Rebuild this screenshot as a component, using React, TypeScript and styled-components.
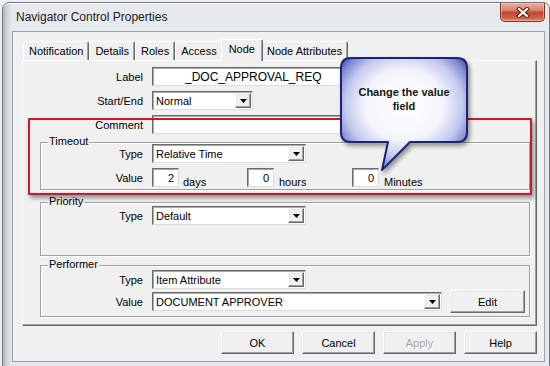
import React from "react";
import styled, { createGlobalStyle, css } from "styled-components";

const GlobalStyle = createGlobalStyle`
  html, body {
    margin: 0;
    padding: 0;
    background: #eef0f2;
  }
  body {
    font-family: "Liberation Sans", Arial, sans-serif;
    font-size: 11px;
    color: #000;
  }
  * {
    box-sizing: border-box;
  }
`;

const sunken = css`
  background: #fff;
  border: 1px solid;
  border-color: #6b6b6b #dcdcdc #dcdcdc #6b6b6b;
  box-shadow: inset 1px 1px 0 #a9a9a9;
`;

const raised = css`
  background: #f0f0f0;
  border: 1px solid;
  border-color: #fcfcfc #696969 #696969 #fcfcfc;
  box-shadow: inset -1px -1px 0 #a0a0a0, inset 1px 1px 0 #e6e6e6;
`;

const Screen = styled.div`
  position: relative;
  width: 550px;
  height: 366px;
  overflow: hidden;
  background: #eef0f2;
`;

const Window = styled.div`
  margin: 2px 0 0 2px;
  width: 548px;
  height: 380px;
  border: 1px solid #6e7781;
  border-radius: 7px 7px 0 0;
  background: linear-gradient(90deg, #b2b7bc 0, #d6dade 5px, #e6e9ed 9px);
  box-shadow: inset 0 1px 0 #fbfcfd;
  display: flex;
  flex-direction: column;
`;

const TitleBar = styled.div`
  height: 28px;
  display: flex;
  align-items: flex-start;
  padding-left: 13px;
`;

const Title = styled.span`
  align-self: center;
  font-size: 12px;
  color: #1b1b1b;
`;

const CloseButton = styled.div`
  margin-left: auto;
  margin-right: 4px;
  width: 45px;
  height: 19px;
  border: 1px solid #7d3326;
  border-top: none;
  border-radius: 0 0 5px 5px;
  background: linear-gradient(#eab1a2 0%, #d98270 40%, #c2452f 52%, #cf5d44 80%, #e08d72 100%);
  box-shadow: inset 0 0 0 1px rgba(255, 210, 200, 0.45);
  display: flex;
  align-items: center;
  justify-content: center;
`;

const Client = styled.div`
  margin-left: 9px;
  width: 533px;
  height: 331px;
  border: 1px solid #99a0a7;
  background: #f0f0f0;
  padding: 7px 7px 0 9px;
  display: flex;
  flex-direction: column;
`;

const TabStrip = styled.div`
  position: relative;
  z-index: 2;
  height: 21px;
  padding-left: 1px;
  display: flex;
  align-items: flex-end;
`;

const Tab = styled.div<{ $active?: boolean }>`
  position: relative;
  height: ${(p) => (p.$active ? 22 : 19)}px;
  margin: ${(p) => (p.$active ? "0 -2px -1px" : "0")};
  z-index: ${(p) => (p.$active ? 2 : 1)};
  padding: 0 ${(p) => (p.$active ? 7 : 5)}px ${(p) => (p.$active ? 3 : 0)}px;
  display: flex;
  align-items: center;
  white-space: nowrap;
  background: #f0f0f0;
  border: 1px solid;
  border-bottom: none;
  border-color: #fff #696969 transparent #fff;
  border-radius: 2px 2px 0 0;
  box-shadow: inset -1px 0 0 #a0a0a0;
`;

const Panel = styled.div`
  position: relative;
  z-index: 1;
  width: 515px;
  border: 1px solid;
  border-color: #fff #696969 #696969 #fff;
  box-shadow: inset -1px -1px 0 #a0a0a0;
  padding: 6px 0 8px 0;
  display: flex;
  flex-direction: column;
`;

const Rows = styled.div<{ $gap: number }>`
  display: flex;
  flex-direction: column;
  gap: ${(p) => p.$gap}px;
`;

const Row = styled.div<{ $h?: number }>`
  display: flex;
  align-items: center;
  height: ${(p) => p.$h ?? 19}px;
`;

const FieldLabel = styled.span<{ $w: number }>`
  flex: 0 0 ${(p) => p.$w}px;
  margin-right: 9px;
  text-align: right;
  white-space: nowrap;
`;

const TextBox = styled.div<{ $w: number; $pad?: number; $size?: number }>`
  ${sunken}
  width: ${(p) => p.$w}px;
  height: 19px;
  padding-left: ${(p) => p.$pad ?? 3}px;
  font-size: ${(p) => p.$size ?? 11}px;
  display: flex;
  align-items: center;
  white-space: nowrap;
  overflow: hidden;
`;

const NumBox = styled.div`
  ${sunken}
  width: 27px;
  height: 19px;
  padding-right: 4px;
  display: flex;
  align-items: center;
  justify-content: flex-end;
`;

const Unit = styled.span<{ $w?: number; $ml: number }>`
  align-self: flex-end;
  line-height: 13px;
  margin-bottom: -2px;
  margin-left: ${(p) => p.$ml}px;
  width: ${(p) => (p.$w ? `${p.$w}px` : "auto")};
  flex-shrink: 0;
`;

const Combo = styled.div<{ $w: number }>`
  ${sunken}
  width: ${(p) => p.$w}px;
  height: 19px;
  padding: 1px 1px 1px 3px;
  display: flex;
  align-items: stretch;
`;

const ComboText = styled.span`
  flex: 1;
  display: flex;
  align-items: center;
  white-space: nowrap;
  overflow: hidden;
`;

const DropButton = styled.span`
  ${raised}
  width: 16px;
  display: flex;
  align-items: center;
  justify-content: center;
`;

const GroupBox = styled.div<{ $mt: number; $pt: number; $pb: number }>`
  position: relative;
  margin: ${(p) => p.$mt}px 0 0 17px;
  width: 490px;
  border: 1px solid #a0a0a0;
  box-shadow: inset 1px 1px 0 #fff, 1px 1px 0 #fff;
  padding: ${(p) => p.$pt}px 0 ${(p) => p.$pb}px 0;
`;

const GroupTitle = styled.span`
  position: absolute;
  top: -8px;
  left: 7px;
  line-height: 13px;
  padding: 0 1px;
  background: #f0f0f0;
`;

const PushButton = styled.div<{ $w?: number; $disabled?: boolean }>`
  ${raised}
  width: ${(p) => p.$w ?? 73}px;
  height: 23px;
  flex-shrink: 0;
  display: flex;
  align-items: center;
  justify-content: center;
  color: ${(p) => (p.$disabled ? "#a0a0a0" : "#000")};
  text-shadow: ${(p) => (p.$disabled ? "1px 1px 0 #fff" : "none")};
`;

const EditButton = styled(PushButton)`
  margin-left: 8px;
`;

const ButtonRow = styled.div`
  margin-top: 5px;
  width: 515px;
  display: flex;
  justify-content: flex-end;
  gap: 8px;
`;

const Highlight = styled.div`
  position: absolute;
  z-index: 5;
  left: 28px;
  top: 118px;
  width: 504px;
  height: 77px;
  border: 2px solid #c21d2c;
  border-radius: 1px;
  box-shadow: 2px 3px 4px rgba(0, 0, 0, 0.4), inset 0 0 1px rgba(255, 120, 120, 0.6);
  pointer-events: none;
`;

const Callout = styled.div`
  position: absolute;
  z-index: 6;
  left: 336px;
  top: 54px;
  width: 140px;
  height: 125px;
  pointer-events: none;
`;

const CalloutShape = styled.svg`
  display: block;
  filter: drop-shadow(2px 3px 2px rgba(0, 0, 0, 0.4));
`;

const CalloutText = styled.div`
  position: absolute;
  left: 5px;
  top: 31px;
  width: 126px;
  text-align: center;
  font-weight: bold;
  font-size: 11px;
  line-height: 14px;
  color: #151515;
`;

const TABS = ["Notification", "Details", "Roles", "Access", "Node", "Node Attributes"];
const ACTIVE_TAB = "Node";

function Arrow() {
  return (
    <svg width="7" height="4" viewBox="0 0 7 4">
      <polygon points="0,0 7,0 3.5,4" fill="#000" />
    </svg>
  );
}

function ComboBox({ width, value }: { width: number; value: string }) {
  return (
    <Combo $w={width}>
      <ComboText>{value}</ComboText>
      <DropButton>
        <Arrow />
      </DropButton>
    </Combo>
  );
}

export default function App() {
  return (
    <Screen>
      <GlobalStyle />
      <Window>
        <TitleBar>
          <Title>Navigator Control Properties</Title>
          <CloseButton>
            <svg width="14" height="11" viewBox="0 0 14 11">
              <path d="M3 2 L11 9 M11 2 L3 9" stroke="#5b1a10" strokeWidth="4.2" strokeLinecap="square" />
              <path d="M3 2 L11 9 M11 2 L3 9" stroke="#fff" strokeWidth="2.2" strokeLinecap="square" />
            </svg>
          </CloseButton>
        </TitleBar>

        <Client>
          <TabStrip>
            {TABS.map((t) => (
              <Tab key={t} $active={t === ACTIVE_TAB}>
                {t}
              </Tab>
            ))}
          </TabStrip>

          <Panel>
            <Rows $gap={5}>
              <Row>
                <FieldLabel $w={120}>Label</FieldLabel>
                <TextBox $w={290} $pad={32} $size={12}>
                  _DOC_APPROVAL_REQ
                </TextBox>
              </Row>
              <Row>
                <FieldLabel $w={120}>Start/End</FieldLabel>
                <ComboBox width={101} value="Normal" />
              </Row>
              <Row>
                <FieldLabel $w={120}>Comment</FieldLabel>
                <TextBox $w={290} />
              </Row>
            </Rows>

            <GroupBox $mt={8} $pt={1} $pb={2}>
              <GroupTitle>Timeout</GroupTitle>
              <Rows $gap={5}>
                <Row>
                  <FieldLabel $w={102}>Type</FieldLabel>
                  <ComboBox width={154} value="Relative Time" />
                </Row>
                <Row>
                  <FieldLabel $w={102}>Value</FieldLabel>
                  <NumBox>2</NumBox>
                  <Unit $ml={4} $w={64}>days</Unit>
                  <NumBox>0</NumBox>
                  <Unit $ml={5} $w={73}>hours</Unit>
                  <NumBox>0</NumBox>
                  <Unit $ml={5}>Minutes</Unit>
                </Row>
              </Rows>
            </GroupBox>

            <GroupBox $mt={12} $pt={3} $pb={30}>
              <GroupTitle>Priority</GroupTitle>
              <Row>
                <FieldLabel $w={102}>Type</FieldLabel>
                <ComboBox width={154} value="Default" />
              </Row>
            </GroupBox>

            <GroupBox $mt={9} $pt={4} $pb={3}>
              <GroupTitle>Performer</GroupTitle>
              <Rows $gap={1}>
                <Row>
                  <FieldLabel $w={102}>Type</FieldLabel>
                  <ComboBox width={154} value="Item Attribute" />
                </Row>
                <Row $h={23}>
                  <FieldLabel $w={102}>Value</FieldLabel>
                  <ComboBox width={290} value="DOCUMENT APPROVER" />
                  <EditButton $w={75}>Edit</EditButton>
                </Row>
              </Rows>
            </GroupBox>
          </Panel>

          <ButtonRow>
            <PushButton>OK</PushButton>
            <PushButton>Cancel</PushButton>
            <PushButton $disabled>Apply</PushButton>
            <PushButton>Help</PushButton>
          </ButtonRow>
        </Client>
      </Window>

      <Highlight />

      <Callout>
        <CalloutShape width="140" height="125" viewBox="0 0 140 125">
          <defs>
            <radialGradient id="calloutFill" cx="0.5" cy="0.42" r="0.62">
              <stop offset="0" stopColor="#ffffff" />
              <stop offset="0.5" stopColor="#f4f5fc" />
              <stop offset="0.75" stopColor="#c3c9ee" />
              <stop offset="0.92" stopColor="#7d88d2" />
              <stop offset="1" stopColor="#4d58b4" />
            </radialGradient>
          </defs>
          <path
            d="M15 4 H121 Q131 4 131 14 V78 Q131 88 121 88 H74 L46 116 L52 88 H15 Q5 88 5 78 V14 Q5 4 15 4 Z"
            fill="url(#calloutFill)"
            stroke="#1c2478"
            strokeWidth="2"
            strokeLinejoin="round"
          />
        </CalloutShape>
        <CalloutText>
          Change the value
          <br />
          field
        </CalloutText>
      </Callout>
    </Screen>
  );
}
